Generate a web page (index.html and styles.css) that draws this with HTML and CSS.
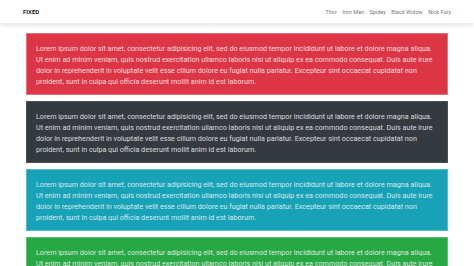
FILE: index.html
```html
<!DOCTYPE html>
<html lang="en">
<head>
    <meta charset="UTF-8">
    <meta name="viewport" content="width=device-width, initial-scale=1.0">
    <title>Fixed</title>
    <link rel="stylesheet" href="styles.css">
</head>
<body>
    <nav class="navbar">
        <span class="brand">FIXED</span>
        <ul class="links">
            <li>Thor</li>
            <li>Iron Man</li>
            <li>Spidey</li>
            <li>Black Widow</li>
            <li>Nick Fury</li>
        </ul>
    </nav>
    <div class="content">
        <div class="box red">
            Lorem ipsum dolor sit amet, consectetur adipisicing elit, sed do eiusmod tempor incididunt ut labore et dolore magna aliqua. Ut enim ad minim veniam, quis nostrud exercitation ullamco laboris nisi ut aliquip ex ea commodo consequat. Duis aute irure dolor in reprehenderit in voluptate velit esse cillum dolore eu fugiat nulla pariatur. Excepteur sint occaecat cupidatat non proident, sunt in culpa qui officia deserunt mollit anim id est laborum.
        </div>
        <div class="box dark">
            Lorem ipsum dolor sit amet, consectetur adipisicing elit, sed do eiusmod tempor incididunt ut labore et dolore magna aliqua. Ut enim ad minim veniam, quis nostrud exercitation ullamco laboris nisi ut aliquip ex ea commodo consequat. Duis aute irure dolor in reprehenderit in voluptate velit esse cillum dolore eu fugiat nulla pariatur. Excepteur sint occaecat cupidatat non proident, sunt in culpa qui officia deserunt mollit anim id est laborum.
        </div>
        <div class="box teal">
            Lorem ipsum dolor sit amet, consectetur adipisicing elit, sed do eiusmod tempor incididunt ut labore et dolore magna aliqua. Ut enim ad minim veniam, quis nostrud exercitation ullamco laboris nisi ut aliquip ex ea commodo consequat. Duis aute irure dolor in reprehenderit in voluptate velit esse cillum dolore eu fugiat nulla pariatur. Excepteur sint occaecat cupidatat non proident, sunt in culpa qui officia deserunt mollit anim id est laborum.
        </div>
        <div class="box green">
            Lorem ipsum dolor sit amet, consectetur adipisicing elit, sed do eiusmod tempor incididunt ut labore et dolore magna aliqua. Ut enim ad minim veniam, quis nostrud exercitation ullamco laboris nisi ut aliquip ex ea commodo consequat. Duis aute irure dolor in reprehenderit in voluptate velit esse cillum dolore eu fugiat nulla pariatur. Excepteur sint occaecat cupidatat non proident, sunt in culpa qui officia deserunt mollit anim id est laborum.
        </div>
    </div>
</body>
</html>
```

FILE: styles.css
```css
body{
    margin: 0;
    background-color: white;
    font-family: Roboto, "Liberation Sans", sans-serif;
    overflow: hidden;
}
.navbar{
    display: flex;
    align-items: center;
    justify-content: space-between;
    height: 23px;
    padding: 0 23px;
    background-color: white;
    box-shadow: 0 2px 5px rgba(0, 0, 0, 0.12);
}
.brand{
    font-size: 6px;
    font-weight: bold;
    color: #222;
}
.links{
    display: flex;
    gap: 5.5px;
    list-style: none;
    margin: 0;
    padding: 0;
    font-size: 5.5px;
    color: #777;
}
.content{
    display: flex;
    flex-direction: column;
    gap: 6px;
    padding: 10px 26px;
}
.box{
    height: 62px;
    box-sizing: border-box;
    padding: 9px 9px;
    font-size: 7.2px;
    line-height: 11.1px;
    color: rgba(255, 255, 255, 0.82);
    border: 1px solid transparent;
}
.red{
    background-color: #dc3545;
    border-color: #e8737e;
}
.dark{
    background-color: #343a40;
    border-color: #4a5057;
}
.teal{
    background-color: #17a2b8;
    border-color: #4fc0d1;
}
.green{
    background-color: #28a745;
    border-color: #5cc174;
}
```
